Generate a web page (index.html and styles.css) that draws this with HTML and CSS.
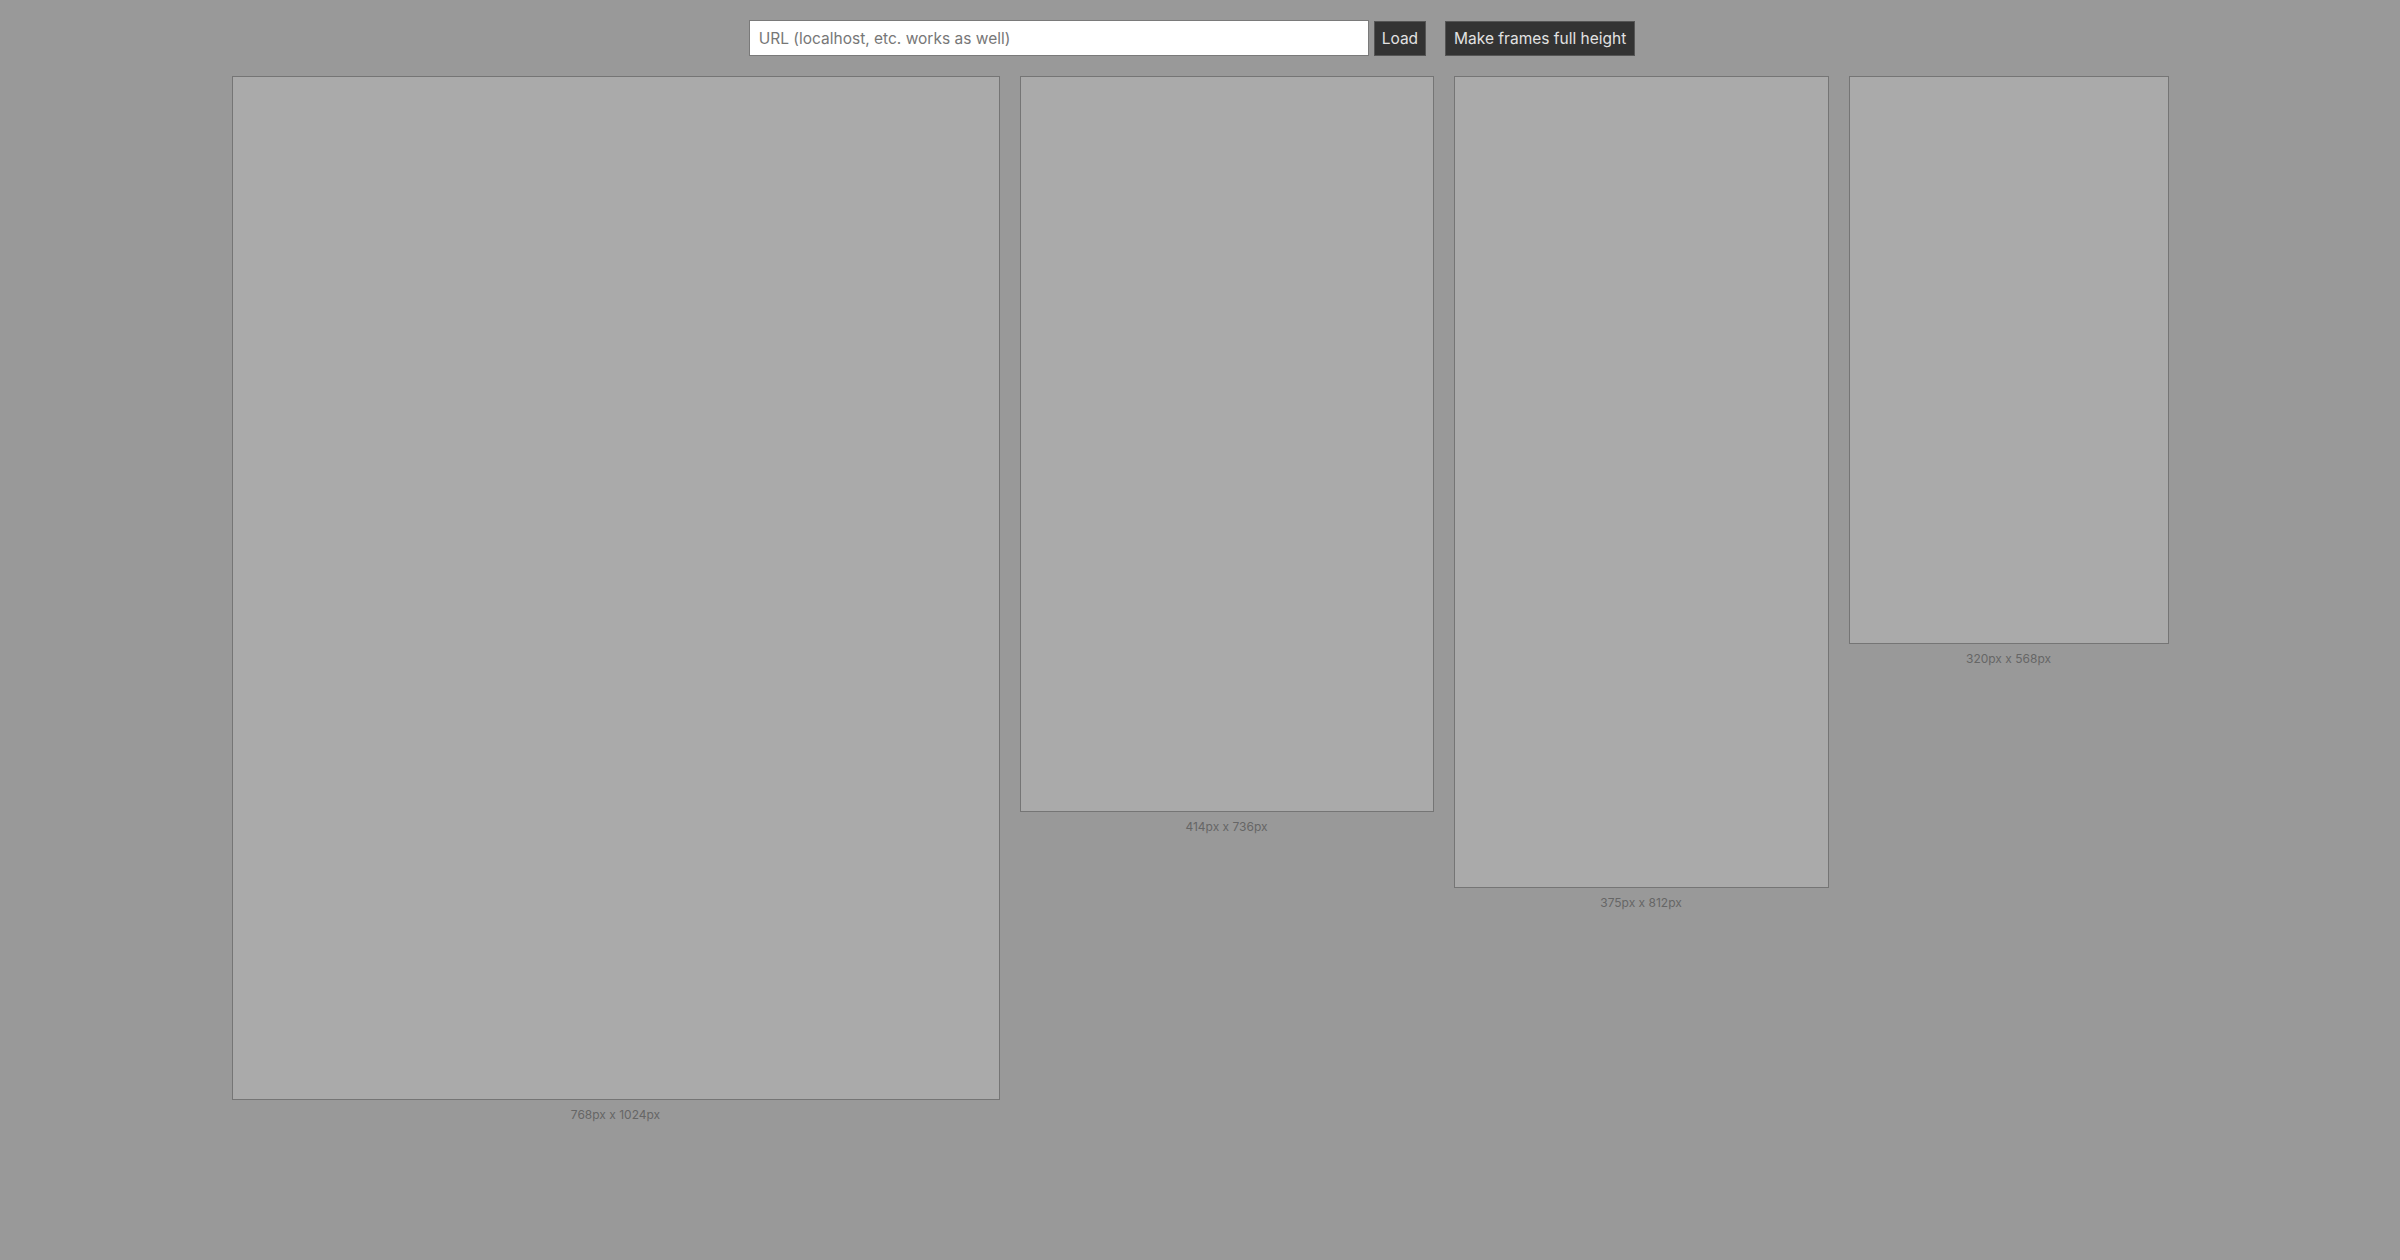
FILE: index.html
```html
<!DOCTYPE html>
<html lang="en">
<head>
<meta charset="utf-8">
<title>Responsive frames</title>
<link rel="stylesheet" href="styles.css">
</head>
<body>
<div class="toolbar">
  <input class="url" type="text" placeholder="URL (localhost, etc. works as well)">
  <button class="btn btn-load">Load</button>
  <button class="btn btn-full">Make frames full height</button>
</div>
<div class="frames">
  <div class="device">
    <div class="screen s768"></div>
    <div class="label">768px x 1024px</div>
  </div>
  <div class="device">
    <div class="screen s414"></div>
    <div class="label">414px x 736px</div>
  </div>
  <div class="device">
    <div class="screen s375"></div>
    <div class="label">375px x 812px</div>
  </div>
  <div class="device">
    <div class="screen s320"></div>
    <div class="label">320px x 568px</div>
  </div>
</div>
</body>
</html>
```

FILE: styles.css
```css
html, body {
  margin: 0;
  padding: 0;
  background: #999999;
  font-family: Inter, "Liberation Sans", sans-serif;
}

.toolbar {
  display: flex;
  justify-content: center;
  align-items: center;
  padding: 20px 16px 0 0;
  height: 36px;
}

.url {
  box-sizing: border-box;
  width: 620px;
  height: 36px;
  margin: 0 5px 0 0;
  padding: 0 9px;
  border: 1px solid #7a7a7a;
  background: #ffffff;
  font-family: Inter, "Liberation Sans", sans-serif;
  font-size: 15.5px;
  color: #333;
  outline: none;
}

.url::placeholder {
  color: #777777;
}

.btn {
  box-sizing: border-box;
  height: 35px;
  margin: 0;
  padding: 0 8px;
  border: 1px solid #555555;
  background: #333333;
  color: #e2e2e2;
  font-family: Inter, "Liberation Sans", sans-serif;
  font-size: 15.5px;
  cursor: pointer;
}

.btn-load {
  padding: 0 7px;
}

.btn-full {
  margin-left: 19px;
}

.frames {
  display: flex;
  justify-content: center;
  align-items: flex-start;
  gap: 20px;
  margin-top: 20px;
}

.screen {
  box-sizing: border-box;
  border: 1px solid #757575;
  background: #aaaaaa;
}

.s768 { width: 768px; height: 1024px; }
.s414 { width: 414px; height: 736px; }
.s375 { width: 375px; height: 812px; }
.s320 { width: 320px; height: 568px; }

.label {
  margin-top: 7px;
  text-align: center;
  font-size: 12px;
  line-height: 15px;
  color: #666666;
}
```
